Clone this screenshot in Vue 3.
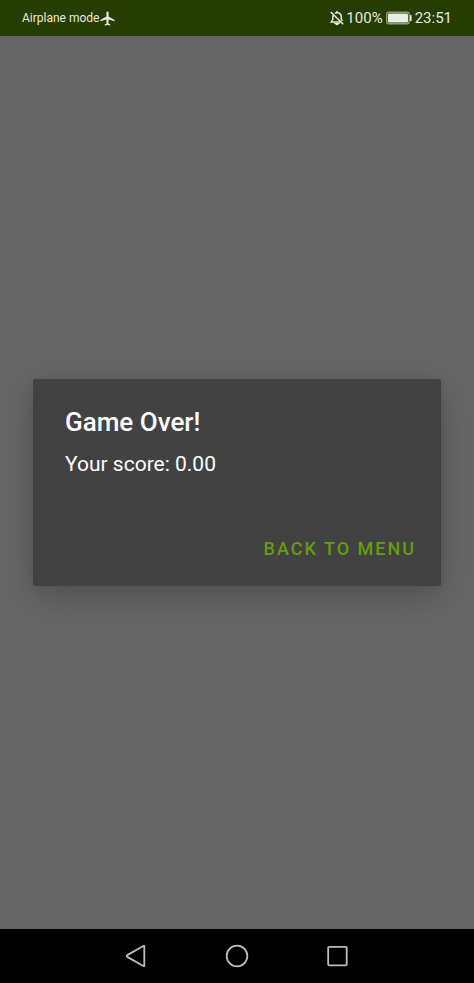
<script setup>
import { ref } from 'vue'

const score = ref(0)
const network = 'Airplane mode'
const battery = 100
const time = '23:51'
</script>

<template>
  <div class="screen">
    <header class="status-bar">
      <div class="status-group status-group--network">
        <span>{{ network }}</span>
        <svg class="plane" viewBox="0 0 24 24" aria-hidden="true">
          <path d="M22 16v-2l-8.500-5V3.500C13.500 2.670 12.830 2 12 2s-1.500.670-1.500 1.500V9L2 14v2l8.500-2.500V19L8 20.500V22l4-1 4 1v-1.500L13.500 19v-5.500z" />
        </svg>
      </div>
      <div class="status-group">
        <svg class="bell" viewBox="0 0 16 16" aria-hidden="true">
          <path d="M4.200 5.200C3.700 6.300 3.700 7.300 3.700 9.500L2.300 12H11.500M5.800 3.400C6.500 2.900 7.200 2.700 8 2.700C10.700 2.700 12.300 4.500 12.300 7V9.200L13.300 11M1.700 2L14.300 14.300M7.200 1.700H8.800" />
          <path d="M6.800 13.700H9.200L8 14.600Z" />
        </svg>
        <span>{{ battery }}%</span>
        <svg class="battery" viewBox="0 0 26 14" aria-hidden="true">
          <rect class="battery-frame" x="0.750" y="1.250" width="22.500" height="11.500" rx="2" />
          <rect class="battery-level" x="2" y="2.500" width="20" height="9" rx="1" />
          <rect class="battery-level" x="24" y="4" width="1.600" height="6" rx="0.600" />
        </svg>
        <span>{{ time }}</span>
      </div>
    </header>

    <main class="backdrop">
      <section class="dialog" role="alertdialog" aria-labelledby="title" aria-describedby="message">
        <h1 id="title" class="dialog-title">Game Over!</h1>
        <p id="message" class="dialog-message">Your score: {{ score.toFixed(2) }}</p>
        <div class="dialog-actions">
          <button type="button" class="dialog-button">BACK TO MENU</button>
        </div>
      </section>
    </main>

    <nav class="nav-bar">
      <button type="button" class="nav-button" aria-label="Back">
        <svg viewBox="0 0 24 24"><path d="M19.300 2.500V21.500Q19.300 22.500 18.300 22L2.300 12.900Q1.100 12 2.300 11.100L18.300 2Q19.300 1.500 19.300 2.500Z" /></svg>
      </button>
      <button type="button" class="nav-button" aria-label="Home">
        <svg viewBox="0 0 24 24"><circle cx="12" cy="12" r="10.300" /></svg>
      </button>
      <button type="button" class="nav-button" aria-label="Recent apps">
        <svg viewBox="0 0 24 24"><rect x="3.200" y="2.800" width="18.500" height="18.500" rx="1" /></svg>
      </button>
    </nav>
  </div>
</template>

<style>
body {
  margin: 0;
  background: #666;
}
</style>

<style scoped>
.screen {
  display: flex;
  flex-direction: column;
  min-height: 100vh;
  font-family: Roboto, 'Liberation Sans', sans-serif;
  color: #fff;
}

.status-bar {
  display: flex;
  align-items: center;
  justify-content: space-between;
  box-sizing: border-box;
  height: 36px;
  padding: 0 22px;
  background: #253d00;
  color: #e6ebdf;
}

.status-group {
  display: flex;
  align-items: center;
  gap: 3px;
  font-size: 15px;
  line-height: 20px;
}

.status-group--network {
  gap: 0;
  font-size: 12px;
}

.plane {
  width: 17px;
  height: 17px;
  fill: currentColor;
}

.bell {
  width: 16px;
  height: 16px;
  margin-right: -2px;
  fill: none;
  stroke: currentColor;
  stroke-width: 1.5;
}

.battery {
  width: 26px;
  height: 14px;
}

.battery-frame {
  fill: none;
  stroke: #8c9a78;
  stroke-width: 1.5;
}

.battery-level {
  fill: #e9ede4;
}

.backdrop {
  display: flex;
  flex: 1;
  align-items: center;
  padding: 0 33px;
  background: #666;
}

.dialog {
  flex: 1;
  padding: 26px 16px 15px 32px;
  border-radius: 2px;
  background: #424242;
  box-shadow: 0 10px 32px rgba(0, 0, 0, 0.2), 0 2px 8px rgba(0, 0, 0, 0.06);
}

.dialog-title {
  margin: 0;
  font-size: 26px;
  font-weight: 500;
  line-height: 34px;
}

.dialog-message {
  margin: 12px 0 50px;
  font-size: 21px;
  line-height: 26px;
}

.dialog-actions {
  display: flex;
  justify-content: flex-end;
}

.dialog-button {
  padding: 0 9px;
  border: 0;
  background: none;
  color: #659b10;
  font-family: inherit;
  font-size: 18px;
  font-weight: 500;
  line-height: 44px;
  letter-spacing: 2px;
}

.nav-bar {
  display: flex;
  align-items: center;
  justify-content: center;
  gap: 76px;
  height: 54px;
  background: #000;
}

.nav-button {
  display: flex;
  padding: 0;
  border: 0;
  background: none;
}

.nav-button svg {
  width: 24px;
  height: 24px;
  fill: none;
  stroke: #bdbdbd;
  stroke-width: 1.8;
}
</style>
